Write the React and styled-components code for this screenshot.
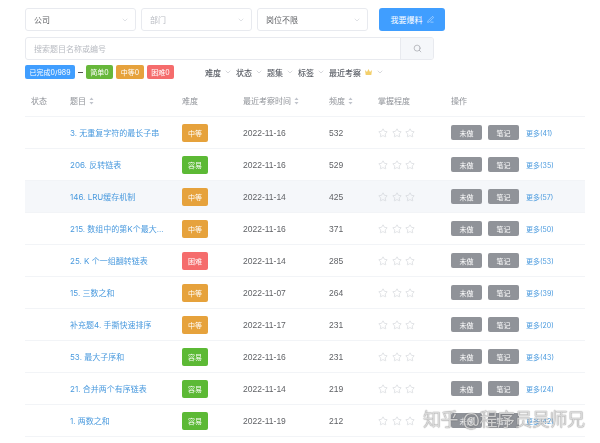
import React from "react";
import styled, { createGlobalStyle } from "styled-components";
import { ChevronDown, Search, PenLine, Star } from "lucide-react";

const Global = createGlobalStyle`
  html, body { margin: 0; padding: 0; background: #fff; }
  body { font-family: "Inter", "Noto Sans CJK SC", sans-serif; font-size: 8px; color: #606266; }
`;
const Page = styled.div`
  position: relative; width: 600px; height: 443px; overflow: hidden;
  padding: 8px 15px 0 25px; box-sizing: border-box; filter: blur(0.3px);
`;
const TopRow = styled.div`display: flex; align-items: center; height: 23px;`;
const Select = styled.div`
  width: 111px; height: 23px; box-sizing: border-box; margin-right: 5px;
  border: 1px solid #e8eaef; border-radius: 3px; display: flex; align-items: center;
  justify-content: space-between; padding: 0 6px 0 8px;
  color: ${p => (p.$muted ? "#b8bbc2" : "#606266")}; font-size: 8px;
  svg { color: #c0c4cc; }
`;
const Submit = styled.div`
  margin-left: 6px; width: 66px; height: 23px; border-radius: 3px; background: #409eff; color: #fff;
  display: flex; align-items: center; justify-content: center; gap: 4px; font-size: 8px;
`;
const SearchRow = styled.div`
  display: flex; width: 409px; height: 23px; margin-top: 6px; box-sizing: border-box;
  border: 1px solid #e8eaef; border-radius: 3px; overflow: hidden;
`;
const SearchInput = styled.div`flex: 1; display: flex; align-items: center; padding-left: 8px; color: #b8bbc2; font-size: 8px;`;
const SearchBtn = styled.div`
  width: 32px; background: #f5f7fa; border-left: 1px solid #e8eaef; display: flex;
  align-items: center; justify-content: center; color: #909399;
`;
const FilterRow = styled.div`display: flex; align-items: center; height: 14px; margin-top: 5px;`;
const Badge = styled.div`
  height: 14px; width: ${p => p.$w}px; border-radius: 2px; background: ${p => p.$bg}; color: #fff;
  display: flex; align-items: center; justify-content: center; font-size: 7px; margin-right: 3px; white-space: nowrap;
`;
const Dash = styled.div`width: 5px; height: 1px; background: #555; margin: 0 3px 0 0;`;
const Filters = styled.div`display: flex; margin-left: 28px; align-items: center;`;
const Filter = styled.div`
  width: ${p => p.$w || 31}px; display: flex; align-items: center; gap: 3px; font-size: 8px; font-weight: 500;
  color: #5a5e66; white-space: nowrap; svg.chev { color: #b0b3ba; }
`;
const Row = styled.div`
  display: grid; grid-template-columns: 45px 112px 61px 86px 49px 73px 1fr;
  width: 560px; height: 32px; align-items: center; box-sizing: border-box;
  border-bottom: 1px solid #f2f4f7; background: ${p => (p.$hover ? "#f5f7fa" : "#fff")};
`;
const Head = styled(Row)`margin-top: 6px; color: #909399; font-size: 8px;`;
const HeadCell = styled.div`display: flex; align-items: center; gap: 3px; padding-left: ${p => p.$pad || 0}px;`;
const Title = styled.div`color: #4a9ade; font-size: 8px; white-space: nowrap;`;
const Level = styled.div`
  width: 26px; height: 18px; border-radius: 2px; background: ${p => p.$bg}; color: #fff;
  display: flex; align-items: center; justify-content: center; font-size: 7px;
`;
const Plain = styled.div`color: #606266; font-family: "Liberation Sans", sans-serif; font-size: 8.5px;`;
const Stars = styled.div`display: flex; gap: 3.5px; color: #c9ccd2;`;
const Actions = styled.div`display: flex; align-items: center; gap: 6px;`;
const Act = styled.div`
  width: 31px; height: 15px; background: #909399; border-radius: 2px; color: #fff;
  display: flex; align-items: center; justify-content: center; font-size: 7px;
`;
const More = styled.div`color: #4a9ade; font-size: 7px; margin-left: 1px;`;
const Watermark = styled.div`
  position: absolute; left: 423px; top: 405px; font-size: 18px; letter-spacing: -0.5px; white-space: nowrap;
  color: rgba(255,255,255,.72); text-shadow: 0 0 1px rgba(60,60,60,.6), 0 0 1px rgba(60,60,60,.45);
`;

const Sort = () => (
  <svg width="5" height="8" viewBox="0 0 5 8"><path d="M2.5 .5L4.5 3H.5z M2.5 7.5L.5 5h4z" fill="#c0c4cc" /></svg>
);
const Crown = () => (
  <svg width="9" height="8" viewBox="0 0 9 8"><path d="M1 2l2 2 1.5-3L6 4l2-2-.7 5H1.7z" fill="#f3cf6b" /></svg>
);
const Chev = ({ s = 8 }) => <ChevronDown className="chev" size={s} strokeWidth={1.5} />;

const O = "#e6a23c", G = "#5cb935", R = "#f56c6c";
const rows = [
  ["3. 无重复字符的最长子串", "中等", O, "2022-11-16", 532, 41],
  ["206. 反转链表", "容易", G, "2022-11-16", 529, 35],
  ["146. LRU缓存机制", "中等", O, "2022-11-14", 425, 57, true],
  ["215. 数组中的第K个最大...", "中等", O, "2022-11-16", 371, 50],
  ["25. K 个一组翻转链表", "困难", R, "2022-11-14", 285, 53],
  ["15. 三数之和", "中等", O, "2022-11-07", 264, 39],
  ["补充题4. 手撕快速排序", "中等", O, "2022-11-17", 231, 20],
  ["53. 最大子序和", "容易", G, "2022-11-16", 231, 43],
  ["21. 合并两个有序链表", "容易", G, "2022-11-14", 219, 24],
  ["1. 两数之和", "容易", G, "2022-11-19", 212, 42],
];

export default function App() {
  return (
    <Page>
      <Global />
      <TopRow>
        <Select>公司<Chev /></Select>
        <Select $muted>部门<Chev /></Select>
        <Select>岗位不限<Chev /></Select>
        <Submit>我要爆料<PenLine size={7} strokeWidth={1.5} /></Submit>
      </TopRow>
      <SearchRow>
        <SearchInput>搜索题目名称或编号</SearchInput>
        <SearchBtn><Search size={9} strokeWidth={1.5} /></SearchBtn>
      </SearchRow>
      <FilterRow>
        <Badge $bg="#409eff" $w={50}>已完成0/989</Badge>
        <Dash />
        <Badge $bg="#67b73a" $w={27}>简单0</Badge>
        <Badge $bg={O} $w={28}>中等0</Badge>
        <Badge $bg={R} $w={27}>困难0</Badge>
        <Filters>
          <Filter>难度<Chev /></Filter>
          <Filter>状态<Chev /></Filter>
          <Filter>题集<Chev /></Filter>
          <Filter>标签<Chev /></Filter>
          <Filter $w={56}>最近考察<Crown /><Chev /></Filter>
        </Filters>
      </FilterRow>
      <Head>
        <HeadCell $pad={6}>状态</HeadCell>
        <HeadCell>题目<Sort /></HeadCell>
        <HeadCell>难度</HeadCell>
        <HeadCell>最近考察时间<Sort /></HeadCell>
        <HeadCell>频度<Sort /></HeadCell>
        <HeadCell>掌握程度</HeadCell>
        <HeadCell>操作</HeadCell>
      </Head>
      {rows.map(([t, l, c, d, f, m, h]) => (
        <Row key={t} $hover={h}>
          <div />
          <Title>{t}</Title>
          <div><Level $bg={c}>{l}</Level></div>
          <Plain>{d}</Plain>
          <Plain>{f}</Plain>
          <Stars>
            <Star size={10} strokeWidth={1.3} />
            <Star size={10} strokeWidth={1.3} />
            <Star size={10} strokeWidth={1.3} />
          </Stars>
          <Actions>
            <Act>未做</Act>
            <Act>笔记</Act>
            <More>更多({m})</More>
          </Actions>
        </Row>
      ))}
      <Watermark>知乎 @程序员吴师兄</Watermark>
    </Page>
  );
}
